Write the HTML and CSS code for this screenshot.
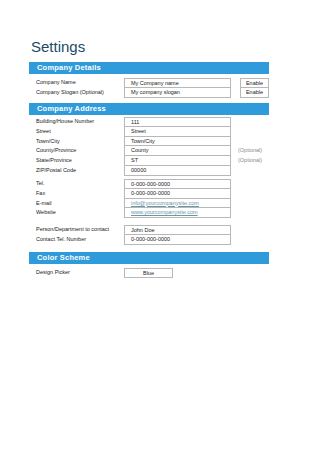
FILE: index.html
```html
<!DOCTYPE html>
<html lang="en">
<head>
    <meta charset="UTF-8">
    <meta name="viewport" content="width=device-width, initial-scale=1.0">
    <title>Settings</title>
    <link rel="stylesheet" href="styles.css">
</head>
<body>
    <div class="sheet">
        <div class="title">Settings</div>

        <div class="bar">Company Details</div>
        <div class="group group-details">
            <div class="row">
                <span class="label">Company Name</span>
                <span class="cell">My Company name</span>
                <span class="cell enable">Enable</span>
            </div>
            <div class="row">
                <span class="label">Company Slogan (Optional)</span>
                <span class="cell">My company slogan</span>
                <span class="cell enable">Enable</span>
            </div>
        </div>

        <div class="bar bar-address">Company Address</div>
        <div class="group group-address">
            <div class="row">
                <span class="label">Building/House Number</span>
                <span class="cell">111</span>
            </div>
            <div class="row">
                <span class="label">Street</span>
                <span class="cell">Street</span>
            </div>
            <div class="row">
                <span class="label">Town/City</span>
                <span class="cell">Town/City</span>
            </div>
            <div class="row">
                <span class="label">County/Province</span>
                <span class="cell">County</span>
                <span class="note">(Optional)</span>
            </div>
            <div class="row">
                <span class="label">State/Province</span>
                <span class="cell">ST</span>
                <span class="note">(Optional)</span>
            </div>
            <div class="row">
                <span class="label">ZIP/Postal Code</span>
                <span class="cell">00000</span>
            </div>
        </div>

        <div class="group group-contact">
            <div class="row">
                <span class="label">Tel.</span>
                <span class="cell">0-000-000-0000</span>
            </div>
            <div class="row">
                <span class="label">Fax</span>
                <span class="cell">0-000-000-0000</span>
            </div>
            <div class="row">
                <span class="label">E-mail</span>
                <span class="cell"><a class="link" href="#">info@yourcompanysite.com</a></span>
            </div>
            <div class="row">
                <span class="label">Website</span>
                <span class="cell"><a class="link" href="#">www.yourcompanysite.com</a></span>
            </div>
        </div>

        <div class="group group-person">
            <div class="row">
                <span class="label">Person/Department to contact</span>
                <span class="cell">John Doe</span>
            </div>
            <div class="row">
                <span class="label">Contact Tel. Number</span>
                <span class="cell">0-000-000-0000</span>
            </div>
        </div>

        <div class="bar bar-color">Color Scheme</div>
        <div class="group group-color">
            <div class="row">
                <span class="label">Design Picker</span>
                <span class="cell picker">Blue</span>
            </div>
        </div>
    </div>
</body>
</html>
```

FILE: styles.css
```css
body {
    margin: 0;
    background-color: #ffffff;
    font-family: 'Liberation Sans', Arial, sans-serif;
    color: #222222;
}

.sheet {
    width: 240px;
    padding: 38px 0 0 29px;
}

.title {
    font-size: 15px;
    line-height: 18px;
    color: #1c4a68;
    padding-left: 2px;
    margin-bottom: 6px;
}

.bar {
    height: 12px;
    line-height: 12px;
    background-color: #2f9bdb;
    color: #ffffff;
    font-size: 7.5px;
    font-weight: bold;
    letter-spacing: 0.2px;
    padding-left: 8px;
}

.bar-address {
    margin-top: 5px;
}

.bar-color {
    margin-top: 7.5px;
}

.group-details { margin-top: 4px; }
.group-address { margin-top: 2.5px; }
.group-contact { margin-top: 3.5px; }
.group-person { margin-top: 7px; }
.group-color { margin-top: 4px; }

.row {
    display: grid;
    grid-template-columns: 95px 107px 9px 29px;
    height: 9.75px;
    font-size: 5.5px;
    line-height: 9px;
}

.label {
    padding-left: 7px;
    white-space: nowrap;
}

.cell {
    box-sizing: border-box;
    border: 1px solid #b8b8b8;
    border-top: none;
    padding-left: 6px;
    white-space: nowrap;
    overflow: hidden;
}

.row:first-child .cell {
    border-top: 1px solid #b8b8b8;
}

.enable {
    grid-column: 4;
    padding-left: 0;
    text-align: center;
}

.note {
    grid-column: 3 / span 2;
    padding-left: 7px;
    color: #8a8a8a;
    white-space: nowrap;
}

.link {
    color: #6a98a6;
    text-decoration: underline;
}

.group-color .row {
    grid-template-columns: 95px 49px;
    height: 10px;
}

.picker {
    padding-left: 0;
    text-align: center;
}
```
